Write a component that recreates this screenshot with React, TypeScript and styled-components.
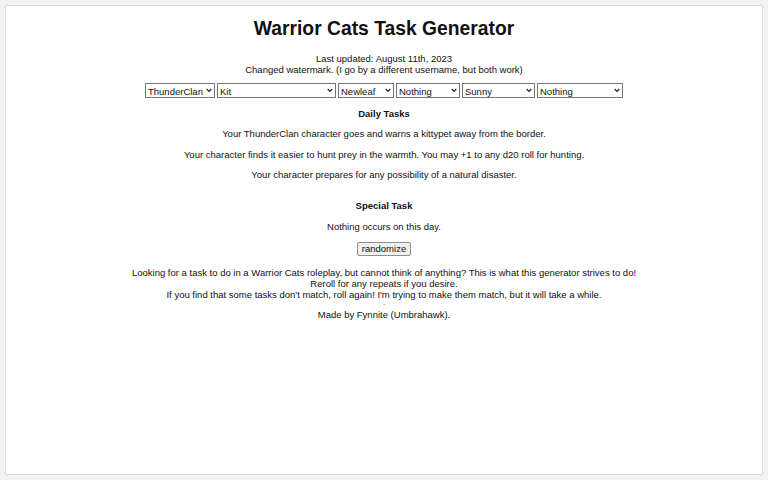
import React from "react";
import styled, { createGlobalStyle } from "styled-components";

const GlobalStyle = createGlobalStyle`
  html, body {
    margin: 0;
    padding: 0;
    background: #f3f3f3;
  }
  body {
    font-family: "Liberation Sans", Arial, sans-serif;
    color: #111;
  }
`;

const SPage = styled.div`
  padding: 5px;
  height: 480px;
  box-sizing: border-box;
`;

const SPanel = styled.div`
  height: 100%;
  box-sizing: border-box;
  background: #fff;
  border: 1px solid #dcdcdc;
  border-radius: 2px;
  display: flex;
  flex-direction: column;
  align-items: center;
  padding-top: 11px;
  text-align: center;
`;

const STitle = styled.h1`
  margin: 0;
  font-size: 19.3px;
  line-height: 23px;
  font-weight: 700;
`;

const SText = styled.p<{ gap?: number }>`
  margin: ${({ gap }) => gap ?? 0}px 0 0;
  font-size: 9.5px;
  line-height: 11px;
`;

const SHeading = styled.h3<{ gap: number }>`
  margin: ${({ gap }) => gap}px 0 0;
  font-size: 9.5px;
  line-height: 11px;
  font-weight: 700;
`;

const SControls = styled.div`
  margin-top: 8px;
  display: flex;
  align-items: flex-start;
  gap: 2px;
  height: 15px;
`;

const SSelectWrap = styled.div<{ w: number }>`
  position: relative;
  width: ${({ w }) => w}px;
  height: 15px;
`;

const SSelect = styled.select`
  appearance: none;
  display: block;
  box-sizing: border-box;
  width: 100%;
  height: 15px;
  margin: 0;
  padding: 1px 9px 0 2px;
  font-family: "Liberation Sans", Arial, sans-serif;
  font-size: 9.5px;
  line-height: 13px;
  color: #111;
  background: #fff;
  border: 1px solid #767676;
  border-radius: 0;
  outline: none;
`;

const SChevron = styled.svg`
  position: absolute;
  right: 3px;
  top: 5px;
  width: 6px;
  height: 5px;
  pointer-events: none;
`;

const SButton = styled.button`
  margin-top: 10px;
  height: 14px;
  padding: 0 4px;
  font-family: "Liberation Sans", Arial, sans-serif;
  font-size: 9.5px;
  line-height: 12px;
  color: #111;
  background: #f0f0f0;
  border: 1px solid #8f8f8f;
  border-radius: 2px;
`;

const SDash = styled.span`
  display: block;
  font-size: 6px;
  line-height: 9px;
  color: #444;
`;

const controls: { w: number; value: string; options: string[] }[] = [
  { w: 70, value: "ThunderClan", options: ["ThunderClan", "RiverClan", "WindClan", "ShadowClan", "SkyClan"] },
  { w: 119, value: "Kit", options: ["Kit", "Apprentice", "Warrior", "Medicine Cat", "Deputy", "Leader", "Elder"] },
  { w: 56, value: "Newleaf", options: ["Newleaf", "Greenleaf", "Leaf-fall", "Leaf-bare"] },
  { w: 64, value: "Nothing", options: ["Nothing", "Injured", "Sick"] },
  { w: 73, value: "Sunny", options: ["Sunny", "Rainy", "Cloudy", "Snowy", "Windy"] },
  { w: 86, value: "Nothing", options: ["Nothing", "Patrol", "Gathering"] },
];

const dailyTasks = [
  "Your ThunderClan character goes and warns a kittypet away from the border.",
  "Your character finds it easier to hunt prey in the warmth. You may +1 to any d20 roll for hunting.",
  "Your character prepares for any possibility of a natural disaster.",
];

export default function App() {
  return (
    <>
      <GlobalStyle />
      <SPage>
        <SPanel>
          <STitle>Warrior Cats Task Generator</STitle>
          <SText gap={13}>
            Last updated: August 11th, 2023
            <br />
            Changed watermark. (I go by a different username, but both work)
          </SText>
          <SControls>
            {controls.map((c, i) => (
              <SSelectWrap key={i} w={c.w}>
                <SSelect defaultValue={c.value}>
                  {c.options.map((o) => (
                    <option key={o}>{o}</option>
                  ))}
                </SSelect>
                <SChevron viewBox="0 0 6 5">
                  <path d="M0.7 1 L3 3.4 L5.3 1" fill="none" stroke="#222" strokeWidth="1.2" />
                </SChevron>
              </SSelectWrap>
            ))}
          </SControls>
          <SHeading gap={10}>Daily Tasks</SHeading>
          {dailyTasks.map((t, i) => (
            <SText key={i} gap={i === 0 ? 9 : 9.5}>
              {t}
            </SText>
          ))}
          <SHeading gap={20}>Special Task</SHeading>
          <SText gap={10}>Nothing occurs on this day.</SText>
          <SButton>randomize</SButton>
          <SText gap={11}>
            Looking for a task to do in a Warrior Cats roleplay, but cannot think of anything? This is what this generator strives to do!
            <br />
            Reroll for any repeats if you desire.
            <br />
            If you find that some tasks don't match, roll again! I'm trying to make them match, but it will take a while.
          </SText>
          <SDash>-</SDash>
          <SText>Made by Fynnite (Umbrahawk).</SText>
        </SPanel>
      </SPage>
    </>
  );
}
